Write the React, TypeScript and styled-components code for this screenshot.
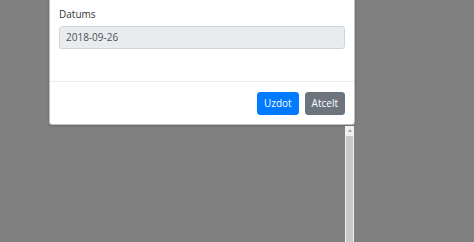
import React from 'react';
import styled, { createGlobalStyle } from 'styled-components';

const GlobalStyle = createGlobalStyle`
  html, body {
    margin: 0;
    padding: 0;
    height: 100%;
    overflow: hidden;
  }
  body {
    background: #808080;
    font-family: 'Open Sans', 'Noto Sans', 'Liberation Sans', sans-serif;
  }
`;

const Backdrop = styled.div`
  width: 474px;
  height: 242px;
  background: #808080;
  overflow: hidden;
`;

const Dialog = styled.div`
  width: 306px;
  margin-left: 49px;
  display: flex;
  flex-direction: column;
`;

const Content = styled.div`
  margin-top: -22px;
  background: #fff;
  border: 1px solid rgba(0, 0, 0, 0.25);
  border-radius: 3px;
  box-shadow: 0 1px 3px rgba(0, 0, 0, 0.2);
`;

const Body = styled.div`
  padding: 28px 9px 32px 9px;
`;

const Label = styled.label`
  display: block;
  font-size: 10px;
  line-height: 14px;
  color: #333;
  margin-bottom: 3px;
`;

const Input = styled.input`
  box-sizing: border-box;
  width: 100%;
  height: 23px;
  padding: 0 6px;
  font-family: inherit;
  font-size: 10px;
  color: #495057;
  background: #e9ecef;
  border: 1px solid #ced4da;
  border-radius: 3px;
  outline: none;
`;

const Footer = styled.div`
  display: flex;
  justify-content: flex-end;
  gap: 6px;
  padding: 10px 9px 9px;
  border-top: 1px solid #e9ecef;
`;

const Button = styled.button<{ $variant: 'primary' | 'secondary' }>`
  height: 23px;
  padding: 0 6px;
  font-family: inherit;
  font-size: 10px;
  color: #fff;
  border: 1px solid ${(p) => (p.$variant === 'primary' ? '#007bff' : '#6c757d')};
  background: ${(p) => (p.$variant === 'primary' ? '#007bff' : '#6c757d')};
  border-radius: 3px;
  cursor: pointer;
`;

const Scrollbar = styled.div`
  align-self: flex-end;
  width: 9px;
  height: 140px;
  margin-top: 1px;
  margin-right: 1px;
  background: #f1f1f1;
  display: flex;
  flex-direction: column;
  align-items: center;
`;

const Arrow = styled.div`
  width: 0;
  height: 0;
  margin-top: 3px;
  border-left: 2.5px solid transparent;
  border-right: 2.5px solid transparent;
  border-bottom: 3px solid #a3a3a3;
`;

const Thumb = styled.div`
  width: 7px;
  flex: 1;
  margin-top: 4px;
  background: #c8c8c8;
`;

export default function App() {
  return (
    <>
      <GlobalStyle />
      <Backdrop>
        <Dialog>
          <Content>
            <Body>
              <Label>Datums</Label>
              <Input value="2018-09-26" readOnly />
            </Body>
            <Footer>
              <Button $variant="primary">Uzdot</Button>
              <Button $variant="secondary">Atcelt</Button>
            </Footer>
          </Content>
          <Scrollbar>
            <Arrow />
            <Thumb />
          </Scrollbar>
        </Dialog>
      </Backdrop>
    </>
  );
}
